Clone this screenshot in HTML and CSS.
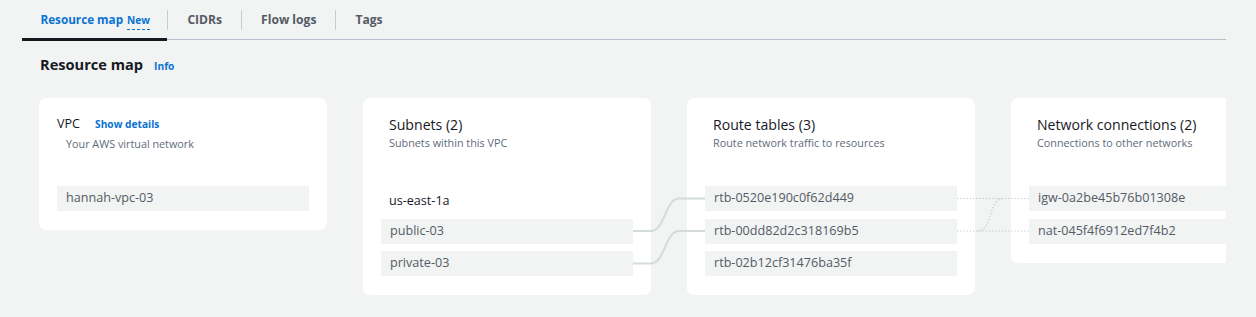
FILE: index.html
```html
<!DOCTYPE html>
<html lang="en">
<head>
<meta charset="utf-8">
<title>Resource map</title>
<link rel="stylesheet" href="styles.css">
</head>
<body>
<div class="page">
  <nav class="tabs">
    <a class="tab active">Resource map <span class="badge-new">New</span></a>
    <span class="sep"></span>
    <a class="tab">CIDRs</a>
    <span class="sep"></span>
    <a class="tab">Flow logs</a>
    <span class="sep"></span>
    <a class="tab">Tags</a>
  </nav>

  <div class="heading">
    <h2>Resource map</h2>
    <a class="info">Info</a>
  </div>

  <div class="map">
    <section class="card vpc">
      <div class="vpc-head">
        <span class="vpc-title">VPC</span>
        <a class="link">Show details</a>
      </div>
      <div class="vpc-sub">Your AWS virtual network</div>
      <div class="items">
        <div class="item">hannah-vpc-03</div>
      </div>
    </section>

    <section class="card">
      <div class="card-head">
        <div class="card-title">Subnets (2)</div>
        <div class="card-sub">Subnets within this VPC</div>
      </div>
      <div class="items">
        <div class="zone">us-east-1a</div>
        <div class="item">public-03</div>
        <div class="item">private-03</div>
      </div>
    </section>

    <section class="card">
      <div class="card-head">
        <div class="card-title">Route tables (3)</div>
        <div class="card-sub">Route network traffic to resources</div>
      </div>
      <div class="items">
        <div class="item">rtb-0520e190c0f62d449</div>
        <div class="item">rtb-00dd82d2c318169b5</div>
        <div class="item">rtb-02b12cf31476ba35f</div>
      </div>
    </section>

    <section class="card">
      <div class="card-head">
        <div class="card-title">Network connections (2)</div>
        <div class="card-sub">Connections to other networks</div>
      </div>
      <div class="items">
        <div class="item">igw-0a2be45b76b01308e</div>
        <div class="item">nat-045f4f6912ed7f4b2</div>
      </div>
    </section>

    <svg class="links" width="1204" height="200" viewBox="0 0 1204 200" aria-hidden="true">
      <g fill="none" stroke="#d5dbdb" stroke-width="2">
        <path d="M611 133 H629 C643 133 643 100.5 657 100.5 H683"/>
        <path d="M611 165.5 H629 C643 165.5 643 133 657 133 H683"/>
      </g>
      <g fill="none" stroke="#c3c8cd" stroke-width="1.2" stroke-dasharray="1.2 2">
        <path d="M935 100.5 H1007"/>
        <path d="M935 133 H1007"/>
        <path d="M956 133 C970 133 967 100.5 981 100.5"/>
      </g>
    </svg>
  </div>
</div>
</body>
</html>
```

FILE: styles.css
```css
* { box-sizing: border-box; }

html, body {
  margin: 0;
  padding: 0;
  background: #f2f3f3;
}

body {
  font-family: "Open Sans", "Noto Sans", Arial, sans-serif;
  color: #16191f;
  -webkit-font-smoothing: antialiased;
}

.page {
  margin-left: 22px;
  width: 1204px;
  overflow: hidden;
  height: 317px;
}

/* Tabs */
.tabs {
  display: flex;
  align-items: flex-start;
  height: 40px;
  border-bottom: 1px solid #b6bec9;
}

.tab {
  display: block;
  padding: 10px 18.5px 8px 19.5px;
  line-height: 19px;
  font-size: 12.1px;
  font-weight: 700;
  color: #545b64;
  border-bottom: 3px solid transparent;
  white-space: nowrap;
}

.tab.active {
  font-size: 11.7px;
  color: #0972d3;
  border-bottom-color: #16191f;
  padding-left: 18.5px;
  padding-right: 17px;
}

.badge-new {
  font-size: 10.1px;
  font-weight: 700;
  color: #0972d3;
  padding-bottom: 2px;
  border-bottom: 1px dashed #0972d3;
  margin-left: 1px;
}

.sep {
  width: 1px;
  height: 20px;
  margin-top: 10px;
  background: #c6ccd1;
}

/* Heading */
.heading {
  display: flex;
  align-items: baseline;
  gap: 11px;
  height: 98px;
  margin-top: -40px;
  padding: 53px 0 0 18px;
}

.heading h2 {
  margin: 0;
  font-size: 14.6px;
  line-height: 22px;
  font-weight: 700;
  color: #16191f;
}

.info {
  font-size: 10.2px;
  font-weight: 700;
  color: #0972d3;
}

/* Map */
.map {
  position: relative;
  display: flex;
  align-items: flex-start;
  gap: 36px;
  padding-left: 17px;
}

.card {
  flex: 0 0 288px;
  width: 288px;
  background: #ffffff;
  border-radius: 7px;
  padding: 16px 18px 19px 18px;
}

.card-head {
  padding-left: 8px;
  padding-top: 1px;
  margin-bottom: 35px;
}

.card-title {
  font-size: 14.1px;
  line-height: 20px;
  color: #16191f;
}

.card-sub {
  font-size: 10.8px;
  line-height: 16px;
  color: #5f6b7a;
}

.vpc-head {
  display: flex;
  align-items: baseline;
  gap: 15px;
  line-height: 20px;
}

.vpc-title {
  font-size: 12.6px;
  color: #16191f;
}

.link {
  font-size: 10.2px;
  font-weight: 700;
  color: #0972d3;
}

.vpc-sub {
  font-size: 10.8px;
  line-height: 16px;
  color: #5f6b7a;
  padding-left: 9px;
  margin-top: 2px;
  margin-bottom: 34px;
}

.items {
  display: flex;
  flex-direction: column;
  gap: 7.5px;
}

.item {
  height: 25px;
  background: #f2f3f3;
  padding: 1px 9px 0 9px;
  font-size: 12.6px;
  line-height: 21px;
  color: #545b64;
  white-space: nowrap;
}

.zone {
  height: 25px;
  padding: 4px 8px 0 8px;
  font-size: 12.6px;
  line-height: 21px;
  color: #16191f;
}

.links {
  position: absolute;
  left: 0;
  top: 0;
  pointer-events: none;
}
```
